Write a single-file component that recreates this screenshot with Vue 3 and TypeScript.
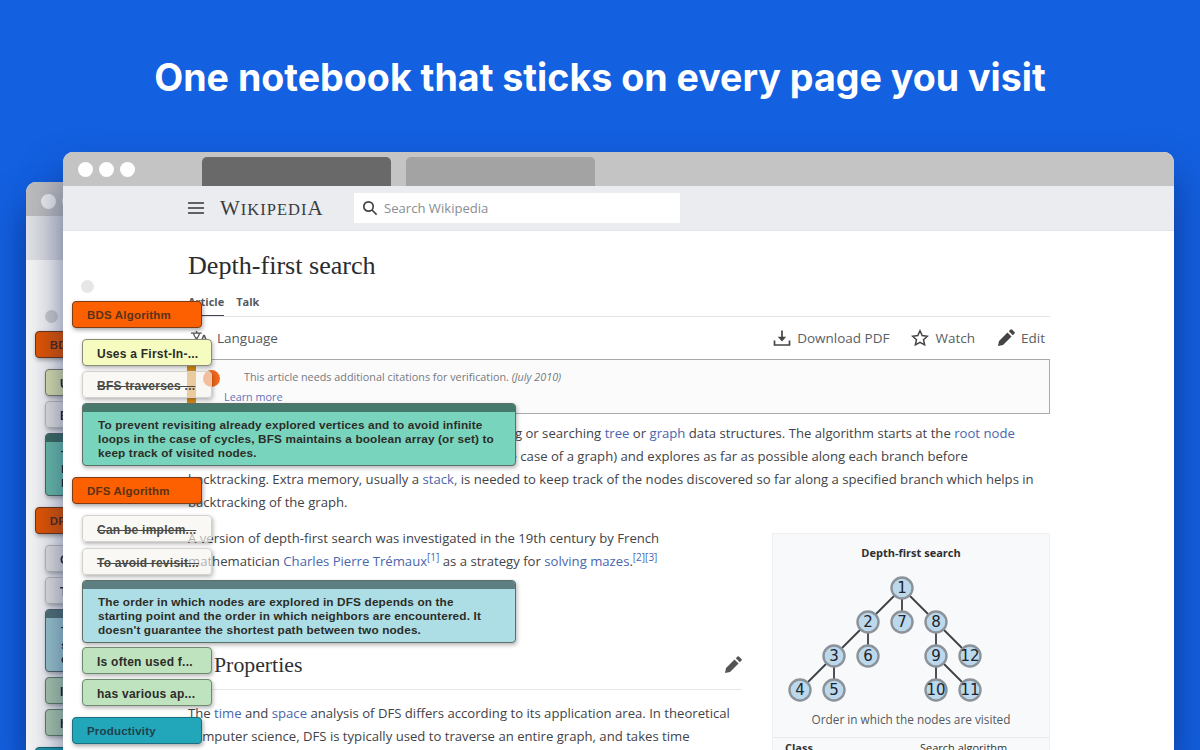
<template>
  <div class="page">
    <h1 class="headline">One notebook that sticks on every page you visit</h1>

    <!-- window behind -->
    <div class="window back">
      <div class="back-bar"><span class="back-dot"></span><span class="back-dot"></span></div>
      <div class="back-head"></div>
      <div class="back-body"></div>
    </div>
    <div class="side-notes back-notes">
      <div class="spot spot-back"></div>
      <div class="note head orange bn1">BD</div>
      <div class="note item yellow bn2">U</div>
      <div class="note item paper bn3">B</div>
      <div class="note card teal bn4"><span class="strip"></span>T<br />l<br />k</div>
      <div class="note head orange bn5">DF</div>
      <div class="note item paper bn6">G</div>
      <div class="note item paper bn7">T</div>
      <div class="note card blue bn8"><span class="strip"></span>T<br />s<br />d</div>
      <div class="note item green bn9">I</div>
      <div class="note item green bn10">h</div>
      <div class="note head cyan bn11"></div>
    </div>

    <!-- main browser window -->
    <div class="window front">
      <div class="tabbar">
        <div class="dots"><span></span><span></span><span></span></div>
        <div class="tab tab-active"></div>
        <div class="tab tab-idle"></div>
      </div>

      <header class="wiki-header">
        <svg class="burger" width="16" height="12" viewBox="0 0 16 12"><path d="M0 1h16M0 6h16M0 11h16" stroke="#333" stroke-width="1.6" /></svg>
        <div class="wiki-logo">W<small>IKIPEDI</small>A</div>
        <div class="wiki-search">
          <svg width="16" height="16" viewBox="0 0 16 16" fill="none" stroke="#444" stroke-width="1.7"><circle cx="6.5" cy="6.5" r="4.7" /><path d="M10 10l4.6 4.6" /></svg>
          <span>Search Wikipedia</span>
        </div>
      </header>

      <main class="article">
        <h2 class="title">Depth-first search</h2>
        <div class="tabs">
          <span class="on">Article</span>
          <span>Talk</span>
        </div>

        <div class="tools">
          <div class="lang">
            <svg width="18" height="18" viewBox="0 0 20 20" fill="#555"><path d="M20 18h-1.44a.61.61 0 0 1-.4-.12.81.81 0 0 1-.23-.31L17 15h-5l-1 2.54a.77.77 0 0 1-.22.3.59.59 0 0 1-.4.14H9l4.55-11.47h1.89zm-3.53-4.31L14.89 9.5a11.62 11.62 0 0 1-.39-1.24q-.09.37-.19.69l-.19.56-1.58 4.19zm-6.3-1.58a13.43 13.43 0 0 1-2.91-1.41 11.46 11.46 0 0 0 2.81-5.37H12V4H7.31a4 4 0 0 0-.2-.56C6.87 2.79 6.6 2 6.6 2l-1.47.5s.4.89.6 1.5H0v1.33h2.15A11.23 11.23 0 0 0 5 10.7a17.19 17.19 0 0 1-5 2.1q.56.82.87 1.38a23.28 23.28 0 0 0 5.22-2.51 15.64 15.64 0 0 0 3.56 1.77zM3.63 5.33h4.91a8.11 8.11 0 0 1-2.45 4.45 9.11 9.11 0 0 1-2.46-4.45z" /></svg>
            <span>Language</span>
          </div>
          <div class="actions">
            <span class="action">
              <svg width="18" height="18" viewBox="0 0 18 18" fill="none" stroke="#444" stroke-width="1.7"><path d="M9 1.500v7" /><path d="M4.800 7.800h8.400L9 12.400z" fill="#444" stroke="none" /><path d="M1.500 11.500v4.500h15v-4.500" /></svg>
              Download PDF
            </span>
            <span class="action">
              <svg width="18" height="18" viewBox="0 0 18 18" fill="none" stroke="#444" stroke-width="1.5"><path d="M9 1.800l2.200 4.800 5.200.6-3.900 3.500 1.100 5.200L9 13.300l-4.600 2.600 1.100-5.200L1.600 7.200l5.200-.6z" /></svg>
              Watch
            </span>
            <span class="action">
              <svg width="18" height="18" viewBox="0 0 18 18" fill="#444"><path d="M1 17l1-5 8.500-8.500 4 4L6 16zM11.800 2.200L13.500.5a1 1 0 0 1 1.400 0l2.600 2.600a1 1 0 0 1 0 1.400l-1.700 1.700z" /></svg>
              Edit
            </span>
          </div>
        </div>

        <div class="notice">
          <p>This article needs additional citations for verification. <i>(July 2010)</i></p>
          <a class="learn">Learn more</a>
        </div>

        <p class="para lead">
          <b>Depth-first search</b> (<b>DFS</b>) is an algorithm for traversing or searching <a>tree</a> or <a>graph</a> data structures. The algorithm starts at the <a>root node</a><br />
          (selecting some arbitrary node as the root node in the case of a graph) and explores as far as possible along each branch before<br />
          backtracking. Extra memory, usually a <a>stack,</a> is needed to keep track of the nodes discovered so far along a specified branch which helps in<br />
          backtracking of the graph.
        </p>

        <div class="columns">
          <div class="col-main">
            <p class="para">
              A version of depth-first search was investigated in the 19th century by French<br />
              mathematician <a>Charles Pierre Trémaux</a><sup>[1]</sup> as a strategy for <a>solving mazes</a>.<sup>[2][3]</sup>
            </p>
            <div class="section-head">
              <h3>Properties</h3>
              <svg width="18" height="18" viewBox="0 0 18 18" fill="#555"><path d="M1 17l1-5 8.500-8.500 4 4L6 16zM11.800 2.200L13.500.5a1 1 0 0 1 1.400 0l2.600 2.600a1 1 0 0 1 0 1.400l-1.700 1.700z" /></svg>
            </div>
            <p class="para">
              The <a>time</a> and <a>space</a> analysis of DFS differs according to its application area. In theoretical<br />
              computer science, DFS is typically used to traverse an entire graph, and takes time
            </p>
          </div>

          <aside class="infobox">
            <div class="info-title">Depth-first search</div>
            <svg class="tree" width="196" height="140" viewBox="0 0 196 140">
              <path v-for="(e, i) in edges" :key="i" :d="edgePath(e)" stroke="#3a3f44" stroke-width="1.8" />
              <g v-for="n in nodes" :key="n.label">
                <circle :cx="n.x" :cy="n.y" r="10.500" fill="#bcd8ec" stroke="#8b9299" stroke-width="2.400" />
                <text :x="n.x" :y="n.y + 5" text-anchor="middle">{{ n.label }}</text>
              </g>
            </svg>
            <div class="caption">Order in which the nodes are visited</div>
            <div class="info-row"><b>Class</b><span>Search algorithm</span></div>
          </aside>
        </div>
      </main>
    </div>

    <!-- sticky notes over the page -->
    <div class="side-notes">
      <div class="spot spot-front"></div>
      <div class="rail"></div>
      <div class="marker"></div>
      <div class="note head orange n1">BDS Algorithm</div>
      <div class="note item yellow n2">Uses a First-In-...</div>
      <div class="note item paper done n3">BFS traverses ...</div>
      <div class="note card teal n4">
        <span class="strip"></span>
        To prevent revisiting already explored vertices and to avoid infinite loops in the case of cycles, BFS maintains a boolean array (or set) to keep track of visited nodes.
      </div>
      <div class="note head orange n5">DFS Algorithm</div>
      <div class="note item paper done n6">Can be implem...</div>
      <div class="note item paper done n7">To avoid revisit...</div>
      <div class="note card blue n8">
        <span class="strip"></span>
        The order in which nodes are explored in DFS depends on the starting point and the order in which neighbors are encountered. It doesn't guarantee the shortest path between two nodes.
      </div>
      <div class="note item green n9">Is often used f...</div>
      <div class="note item green n10">has various ap...</div>
      <div class="note head cyan n11">Productivity</div>
    </div>
  </div>
</template>

<script setup lang="ts">
type TreeNode = { label: string; x: number; y: number };

const nodes: TreeNode[] = [
  { label: '1', x: 98, y: 12 },
  { label: '2', x: 64, y: 46 },
  { label: '7', x: 98, y: 46 },
  { label: '8', x: 132, y: 46 },
  { label: '3', x: 30, y: 80 },
  { label: '6', x: 64, y: 80 },
  { label: '9', x: 132, y: 80 },
  { label: '12', x: 166, y: 80 },
  { label: '4', x: -4, y: 114 },
  { label: '5', x: 30, y: 114 },
  { label: '10', x: 132, y: 114 },
  { label: '11', x: 166, y: 114 },
];

const edges: [string, string][] = [
  ['1', '2'], ['1', '7'], ['1', '8'],
  ['2', '3'], ['2', '6'], ['3', '4'], ['3', '5'],
  ['8', '9'], ['8', '12'], ['9', '10'], ['9', '11'],
];

const edgePath = (e: [string, string]) => {
  const a = nodes.find((n) => n.label === e[0])!;
  const b = nodes.find((n) => n.label === e[1])!;
  return `M${a.x} ${a.y}L${b.x} ${b.y}`;
};
</script>

<style>
html, body { margin: 0; }
</style>

<style scoped>
.page {
  position: relative;
  width: 1200px;
  height: 750px;
  overflow: hidden;
  background: #1360e0;
  font-family: "Open Sans", sans-serif;
}

.headline {
  margin: 0;
  padding-top: 55px;
  text-align: center;
  font: 700 37.600px/45px Inter, sans-serif;
  color: #fff;
}

.window {
  position: absolute;
  overflow: hidden;
  border-radius: 10px 10px 0 0;
}

.front {
  left: 63px;
  top: 152px;
  width: 1111px;
  height: 598px;
  background: #fff;
  box-shadow: 0 24px 40px rgba(5, 25, 90, 0.55);
}

.back {
  left: 26px;
  top: 182px;
  width: 60px;
  height: 568px;
  background: #fff;
  box-shadow: 0 24px 36px rgba(5, 25, 90, 0.55);
}

.back-bar {
  display: flex;
  gap: 6px;
  height: 34px;
  padding: 12px 0 0 15px;
  box-sizing: border-box;
  background: #bdbdbd;
}

.back-dot {
  width: 15px;
  height: 15px;
  flex: none;
  border-radius: 50%;
  background: #ededed;
}

.back-head { height: 44px; background: linear-gradient(90deg, #e3e4e8, #c9cacd); }
.back-body { height: 100%; background: linear-gradient(90deg, #f6f6f6 40%, #d9d9d9); }

.tabbar {
  display: flex;
  align-items: flex-end;
  height: 34px;
  background: #c4c4c4;
}

.dots {
  display: flex;
  gap: 6px;
  align-self: center;
  padding-left: 15px;
  width: 139px;
  box-sizing: border-box;
}

.dots span {
  width: 15px;
  height: 15px;
  border-radius: 50%;
  background: #fff;
}

.tab { width: 189px; height: 29px; border-radius: 5px 5px 0 0; }
.tab-active { background: #696969; }
.tab-idle { margin-left: 15px; background: #a3a3a3; }

.wiki-header {
  display: flex;
  align-items: center;
  height: 44px;
  padding-left: 125px;
  background: #eaecf0;
  border-bottom: 1px solid #e3e4e8;
}

.wiki-logo {
  margin-left: 16px;
  width: 134px;
  font: 21px/1 "Liberation Serif", serif;
  color: #3a3c40;
  letter-spacing: 1px;
}

.wiki-logo small { font-size: 16.500px; }

.wiki-search {
  display: flex;
  align-items: center;
  gap: 6px;
  width: 326px;
  height: 30px;
  margin-top: -1px;
  padding-left: 8px;
  box-sizing: border-box;
  background: #fff;
  font-size: 13.100px;
  color: #8a8d92;
}

.article {
  padding: 0 124px 0 125px;
  color: #54595d;
  font-size: 14px;
}

.title {
  margin: 0;
  padding-top: 20px;
  font: 400 26.100px/30px "Liberation Serif", serif;
  color: #2a2c30;
}

.tabs {
  display: flex;
  gap: 12px;
  margin-top: 13px;
  height: 22px;
  border-bottom: 1px solid #e4e5e8;
  font-size: 11px;
  font-weight: 700;
  line-height: 16px;
  color: #55595e;
}

.tabs .on {
  height: 21px;
  border-bottom: 1px solid #44474c;
}

.tools {
  display: flex;
  justify-content: space-between;
  align-items: center;
  height: 42px;
  padding-right: 5px;
  font-size: 13.500px;
}

.lang, .action, .actions { display: flex; align-items: center; }
.lang { gap: 8px; padding-left: 3px; }
.actions { gap: 22px; }
.action { gap: 6px; color: #5a5e63; }

.notice {
  box-sizing: border-box;
  height: 55px;
  margin-bottom: 8px;
  padding: 8px 0 0 36px;
  background: #fbfbfc;
  border: 1px solid #a8abae;
  border-width: 1px 1px 1px 0;
  font-size: 10.800px;
  color: #75797d;
}

.notice p { margin: 0; padding-left: 20px; line-height: 18px; }

.learn {
  display: block;
  margin-top: 4px;
  line-height: 14px;
  color: #6272b8;
}

.para {
  margin: 0;
  font-size: 13.140px;
  line-height: 23px;
  color: #3f4347;
  white-space: nowrap;
}

.para a { color: #4a66ad; }
.para sup { font-size: 10px; line-height: 0; color: #4a66ad; }

.lead { margin-bottom: 13px; }

.columns {
  display: flex;
  justify-content: space-between;
}

.col-main { width: 554px; }

.section-head {
  display: flex;
  justify-content: space-between;
  align-items: center;
  margin-top: 77px;
  padding-bottom: 9px;
  border-bottom: 1px solid #e6e7ea;
  margin-bottom: 12px;
}

.section-head h3 {
  margin: 0;
  padding-left: 26px;
  font: 400 21.800px/30px "Liberation Serif", serif;
  color: #2e3034;
}

.infobox {
  width: 278px;
  height: 240px;
  margin-top: 6px;
  box-sizing: border-box;
  background: #f8f9fa;
  border: 1px solid #eff0f2;
  text-align: center;
}

.info-title {
  padding-top: 11px;
  font-size: 11px;
  font-weight: 700;
  line-height: 16px;
  color: #2d2f33;
}

.tree {
  display: block;
  margin: 15px 0 0 31px;
  overflow: visible;
}

.tree text {
  font: 15px "DejaVu Sans", sans-serif;
  fill: #20242a;
}

.caption {
  margin-top: -6px;
  padding-bottom: 9px;
  border-bottom: 1px solid #e8e9ec;
  font-size: 11.800px;
  line-height: 18px;
  color: #54595d;
}

.info-row {
  display: flex;
  gap: 107px;
  padding: 3px 0 0 12px;
  font-size: 11px;
  line-height: 14px;
  color: #333;
}

.side-notes {
  position: absolute;
  left: 0;
  top: 0;
}

.back-notes {
  width: 63px;
  height: 750px;
  overflow: hidden;
  filter: brightness(0.9);
}

.spot {
  position: absolute;
  width: 13px;
  height: 13px;
  border-radius: 50%;
  background: #e6e6e6;
}

.spot-front { left: 81px; top: 280px; }
.spot-back { left: 45px; top: 310px; }

.rail {
  position: absolute;
  left: 187px;
  top: 366px;
  width: 9px;
  height: 38px;
  background: #d88a18;
}

.marker {
  position: absolute;
  left: 203px;
  top: 370px;
  width: 17px;
  height: 17px;
  border-radius: 50%;
  background: #f2661a;
}

.note {
  position: absolute;
  box-sizing: border-box;
  font: 700 11.800px/1 "Liberation Sans", sans-serif;
  color: #2c2c28;
  letter-spacing: 0.14px;
}

.head {
  width: 130px;
  height: 27px;
  padding: 0 14px;
  font-size: 11.500px;
  letter-spacing: 0.2px;
  line-height: 26px;
  border: 1px solid #7c3c14;
  border-radius: 4px;
  box-shadow: 1px 2px 4px rgba(0, 0, 0, 0.35);
  color: #5b3218;
}

.item {
  width: 130px;
  height: 27px;
  padding: 0 14px;
  font-size: 12px;
  letter-spacing: 0.25px;
  line-height: 28px;
  border: 1px solid #8a8a78;
  border-radius: 4px;
  box-shadow: 1px 2px 4px rgba(0, 0, 0, 0.3);
  white-space: nowrap;
  overflow: hidden;
}

.card {
  width: 434px;
  height: 63px;
  padding: 14px 18px 0 15px;
  line-height: 14px;
  border: 1px solid #5c6f68;
  border-radius: 4px;
  box-shadow: 1px 2px 4px rgba(0, 0, 0, 0.3);
  overflow: hidden;
}

.strip {
  position: absolute;
  left: 0;
  top: 0;
  right: 0;
  height: 8px;
}

.orange { background: #fc6000; }
.cyan { background: #22a7ba; border-color: #1a6f80; color: #1f3f4c; }
.yellow { background: #f6fcc0; }
.paper { background: rgba(245, 243, 239, 0.62); border-color: #d3d1cc; }
.done { text-decoration: line-through; color: #4a4a46; }
.teal { background: #79d4bd; }
.teal .strip { background: #46796b; }
.blue { background: #aedee5; }
.blue .strip { background: #5e7f81; }
.green { background: #bfe2bf; border-color: #6f8a6f; }

.n1 { left: 72px; top: 301px; }
.n2 { left: 82px; top: 339px; }
.n3 { left: 82px; top: 371px; }
.n4 { left: 82px; top: 403px; }
.n5 { left: 72px; top: 477px; }
.n6 { left: 82px; top: 515px; }
.n7 { left: 82px; top: 548px; }
.n8 { left: 82px; top: 580px; }
.n9 { left: 82px; top: 647px; }
.n10 { left: 82px; top: 679px; }
.n11 { left: 72px; top: 717px; }

.bn1 { left: 35px; top: 331px; }
.bn2 { left: 45px; top: 369px; }
.bn3 { left: 45px; top: 401px; }
.bn4 { left: 45px; top: 433px; }
.bn5 { left: 35px; top: 507px; }
.bn6 { left: 45px; top: 545px; }
.bn7 { left: 45px; top: 577px; }
.bn8 { left: 45px; top: 609px; }
.bn9 { left: 45px; top: 677px; }
.bn10 { left: 45px; top: 709px; }
.bn11 { left: 35px; top: 747px; }
</style>
